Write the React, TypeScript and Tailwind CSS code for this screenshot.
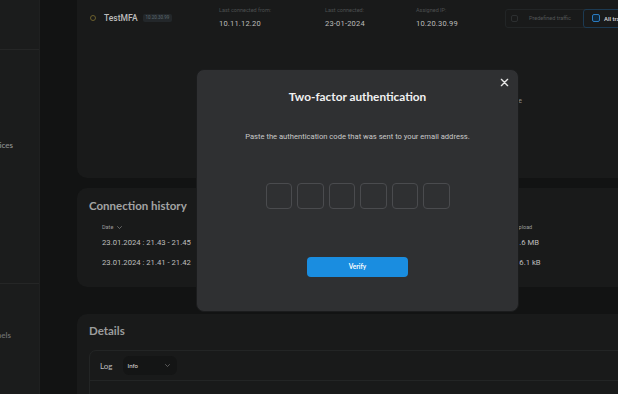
import React from "react";

const body = { fontFamily: "Roboto, 'Liberation Sans', sans-serif" };
const head = { fontFamily: "Lato, 'Open Sans', sans-serif" };

function Chevron({ className = "" }: { className?: string }) {
  return (
    <svg viewBox="0 0 10 6" className={className} fill="none" stroke="currentColor" strokeWidth="1.2" strokeLinecap="round" strokeLinejoin="round">
      <path d="M1 1l4 4 4-4" />
    </svg>
  );
}

function Stat({ label, value, w }: { label: string; value: string; w: string }) {
  return (
    <div className={`flex flex-col gap-[5px] shrink-0 ${w}`}>
      <span className="text-[5.5px] leading-[7px] text-[#4d5051] whitespace-nowrap">{label}</span>
      <span className="text-[7.5px] leading-[10px] text-[#bdbdbd] tracking-[0.2px]">{value}</span>
    </div>
  );
}

export default function App() {
  return (
    <div className="relative w-[618px] h-[394px] overflow-hidden bg-[#121313] flex" style={body}>
      {/* sidebar */}
      <div className="w-[40px] shrink-0 bg-[#1b1c1c] border-r border-[#1f2020] flex flex-col">
        <div className="h-[50px] border-b border-[#252626]" />
        <div className="h-[234px] border-b border-[#252626] overflow-hidden">
          <div className="flex justify-end pr-[26px] mt-[89px] overflow-hidden">
            <span className="whitespace-nowrap text-[8px] font-semibold text-[#8a8c8c]" style={head}>Devices</span>
          </div>
        </div>
        <div className="flex-1 overflow-hidden">
          <div className="flex justify-end pr-[28px] mt-[45px] overflow-hidden">
            <span className="whitespace-nowrap text-[8px] font-semibold text-[#6f7171]" style={head}>Tunnels</span>
          </div>
        </div>
      </div>

      {/* main */}
      <div className="flex-1 pl-[37px] overflow-hidden">
        <div className="w-[600px] flex flex-col">
          {/* card 1 */}
          <div className="h-[178px] bg-[#191a1a] rounded-b-[10px] flex flex-col">
            <div className="flex items-center h-[36px] pl-[13px]">
              <div className="w-[129px] shrink-0 flex items-center">
                <div className="w-[6px] h-[6px] rounded-full border border-[#6b5f2c]" />
                <span className="ml-[8px] text-[8.5px] font-medium text-[#bcbcbc]">TestMFA</span>
                <span className="ml-[5px] px-[3px] h-[8px] flex items-center rounded-[2px] bg-[#23272a] text-[4.5px] text-[#5d6a70]">10.20.30.99</span>
              </div>
              <Stat w="w-[106px]" label="Last connected from:" value="10.11.12.20" />
              <Stat w="w-[91px]" label="Last connected:" value="23-01-2024" />
              <Stat w="w-[89px]" label="Assigned IP:" value="10.20.30.99" />
              <div className="shrink-0 flex h-[19px] rounded-[3px] border border-[#222526]">
                <div className="flex items-center w-[78px] pl-[5px] gap-[11px]">
                  <div className="w-[7px] h-[7px] rounded-[2px] border border-[#2c2f30]" />
                  <span className="text-[5.5px] text-[#535657] whitespace-nowrap">Predefined traffic</span>
                </div>
                <div className="flex items-center pl-[8px] pr-[10px] gap-[4px] border border-[#1c3a52] rounded-[3px] -m-px">
                  <div className="w-[8px] h-[8px] rounded-[2px] border-[1.5px] border-[#2a7bc0] bg-[#10283b]" />
                  <span className="text-[6px] font-medium text-[#d5d5d5] whitespace-nowrap">All traffic</span>
                </div>
              </div>
            </div>
            <div className="mt-[61px] w-[445px] text-right text-[6.5px] text-[#8a8a8a]">Route</div>
          </div>

          {/* card 2 */}
          <div className="mt-[10px] h-[99px] bg-[#191a1a] rounded-[10px] pl-[12px] pt-[11px] flex flex-col">
            <span className="text-[11.5px] leading-[14px] font-bold text-[#a3a4a4]" style={head}>Connection history</span>
            <div className="flex pl-[13px] mt-[10px]">
              <div className="w-[413px] shrink-0 flex flex-col">
                <div className="flex items-center gap-[4px] h-[8px]">
                  <span className="text-[5.5px] text-[#9a9b9b]">Date</span>
                  <Chevron className="w-[5px] h-[3px] text-[#9a9b9b]" />
                </div>
                <span className="mt-[7px] text-[7.7px] leading-[10px] text-[#bebebe]">23.01.2024 : 21.43 - 21.45</span>
                <span className="mt-[10px] text-[7.7px] leading-[10px] text-[#bebebe]">23.01.2024 : 21.41 - 21.42</span>
              </div>
              <div className="flex flex-col">
                <div className="flex items-center h-[8px]">
                  <span className="text-[5.5px] text-[#9a9b9b]">Upload</span>
                </div>
                <span className="mt-[7px] text-[7.7px] leading-[10px] text-[#bebebe]">1.6 MB</span>
                <span className="mt-[10px] text-[7.7px] leading-[10px] text-[#bebebe]">36.1 kB</span>
              </div>
            </div>
          </div>

          {/* card 3 */}
          <div className="mt-[27px] h-[120px] bg-[#191a1a] rounded-t-[10px] pl-[12px] pt-[10px] flex flex-col">
            <span className="text-[11.5px] leading-[14px] font-bold text-[#9c9d9d]" style={head}>Details</span>
            <div className="mt-[12px] rounded-t-[7px] border border-[#232525] flex flex-col">
              <div className="flex items-center h-[30px] pl-[10px] border-b border-[#232525]">
                <span className="text-[8px] text-[#bdbdbd]" style={head}>Log</span>
                <div className="ml-[10px] w-[54px] h-[19px] rounded-[6px] bg-[#141515] flex items-center justify-between pl-[5px] pr-[7px]">
                  <span className="text-[6px] font-medium text-[#d0d0d0]" style={head}>Info</span>
                  <Chevron className="w-[5px] h-[3px] text-[#8a8a8a]" />
                </div>
              </div>
              <div className="h-[60px]" />
            </div>
          </div>
        </div>
      </div>

      {/* modal */}
      <div className="absolute left-[196px] top-[69px] w-[323px] h-[243px] rounded-[8px] bg-[#2f3032] border border-[#1b1c1d] flex flex-col items-center">
        <button className="absolute right-[9px] top-[8px] w-[9px] h-[9px] text-[#e6e6e6]">
          <svg viewBox="0 0 10 10" className="w-full h-full" fill="none" stroke="currentColor" strokeWidth="1.5" strokeLinecap="round">
            <path d="M1.5 1.5l7 7M8.5 1.5l-7 7" />
          </svg>
        </button>
        <span className="mt-[20px] text-[11.8px] leading-[14px] font-bold text-[#f2f2f2]" style={head}>Two-factor authentication</span>
        <span className="mt-[28px] text-[7.6px] leading-[10px] text-[#c9c9c9]">Paste the authentication code that was sent to your email address.</span>
        <div className="mt-[41px] flex gap-[5px]">
          {[0, 1, 2, 3, 4, 5].map((i) => (
            <div key={i} className="w-[26.5px] h-[26px] rounded-[4px] border border-[#4a4b4e]" />
          ))}
        </div>
        <button className="mt-[48px] w-[101px] h-[20px] rounded-[4px] bg-[#1a8de0] text-white text-[6.5px] font-bold" style={head}>Verify</button>
      </div>
    </div>
  );
}
